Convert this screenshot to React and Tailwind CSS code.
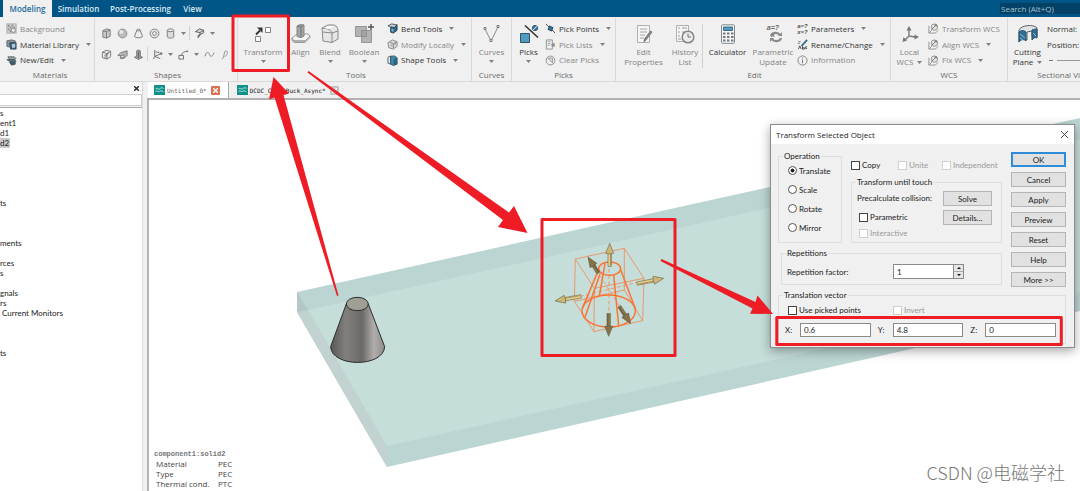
import React from "react";

const G = "#777777";

/* ---------- small ribbon icons ---------- */

function Icon({ size = 11, box = 12, children }) {
  return (
    <svg width={size} height={size} viewBox={`0 0 ${box} ${box}`} className="shrink-0" fill="none" stroke={G} strokeWidth="1" aria-hidden="true">
      {children}
    </svg>
  );
}

const Checker = () => (
  <Icon>
    <rect x="1" y="1" width="10" height="10" fill="#d5d5d5" stroke="#a5a5a5" />
    <path d="M2 2h2v2H2zM6 2h2v2H6zM4 4h2v2H4zM8 4h2v2H8zM2 6h2v2H2zM6 6h2v2H6zM4 8h2v2H4z" fill="#8c8c8c" stroke="none" />
    <circle cx="8" cy="8" r="2.3" fill="#e8e8e8" stroke="#8c8c8c" />
  </Icon>
);
const Library = () => (
  <Icon>
    <path d="M1 2l5-1 4 1v6l-5 1-4-1z" fill="#8d979c" stroke="#5c666b" />
    <path d="M4 4h7v7H5z" fill="#2e6686" stroke="#39464d" />
    <path d="M6 6l4-1v4l-3 1z" fill="#b9cbd4" stroke="none" />
  </Icon>
);
const Stack = () => (
  <Icon>
    <path d="M2 2h7l2 2-2 1H4z" fill="#9aa4a9" stroke="#5c666b" />
    <path d="M1 5h8l2 2H4z" fill="#5d7a8a" stroke="#4a5559" />
    <path d="M4 8h6v2l-4 1z" fill="#2e6686" stroke="#39464d" />
  </Icon>
);
const Box = () => (
  <Icon>
    <path d="M2 3l4-2 4 1v7l-4 2-4-1z" fill="#c9c9c9" />
    <path d="M2 3l4 1v7M6 4l4-2" />
  </Icon>
);
const Sphere = () => (
  <Icon>
    <circle cx="6" cy="6" r="4.8" fill="#bdbdbd" stroke="#8c8c8c" />
    <circle cx="4.6" cy="4.4" r="2" fill="#ededed" stroke="none" />
  </Icon>
);
const ConeIcon = () => (
  <Icon>
    <path d="M4.3 2.2L1.6 9.2c1 2 7.800 2 8.800 0L7.700 2.200z" fill="#ececec" />
    <ellipse cx="6" cy="2.300" rx="1.800" ry="1" fill="#fff" />
  </Icon>
);
const Torus = () => (
  <Icon>
    <circle cx="6" cy="6" r="4.800" fill="#e6e6e6" />
    <circle cx="6" cy="6" r="2" fill="#fafafa" />
  </Icon>
);
const Cylinder = () => (
  <Icon>
    <path d="M2.500 2.500v7c0 2 7 2 7 0v-7" fill="#dcdcdc" />
    <ellipse cx="6" cy="2.500" rx="3.500" ry="1.500" fill="#f4f4f4" />
  </Icon>
);
const Bent = () => (
  <Icon>
    <path d="M1.500 4L6 1l4.500 1.500L6.500 5zM6.500 5v2.500L10.500 5V2.500M6.500 7.500L4.500 10.500V8z" fill="#dadada" stroke="#555" />
  </Icon>
);
const BoxMesh = () => (
  <Icon>
    <path d="M1.500 3.500l4-2 5 1v6l-4 2.500-5-1.500z" fill="#ececec" />
    <path d="M1.500 3.500l5 1.500v6M6.500 5l4-2.500M3.500 7.500l5-3M4 10l3-4" />
  </Icon>
);
const Extrude = () => (
  <Icon>
    <path d="M1 7l3-3 7-2v5l-3 3-4 .500v-3z" fill="#b5b5b5" />
    <path d="M4 7.500l3.500-1V9l-3 1z" fill="#f2f2f2" />
  </Icon>
);
const Column = () => (
  <Icon>
    <path d="M4 2l2-1 2 1v6l2.500 1L6 11.500 1.500 9 4 8z" fill="#999" />
    <path d="M6 3v7" stroke="#666" />
  </Icon>
);
const Axes = () => (
  <Icon>
    <path d="M3 1v7l7-3M3 8l6 2.500M3 8l-1.500 3M4 3l4 1" stroke="#6a6a6a" />
    <circle cx="10" cy="5" r="1" fill="#777" />
  </Icon>
);
const Wire = () => (
  <Icon>
    <path d="M1 7h5v4H1zM3.500 7C4 4 7 2.500 11 2.500" stroke="#6a6a6a" />
    <path d="M10 1.500v2" stroke="#6a6a6a" />
  </Icon>
);
const Wave = () => (
  <Icon>
    <path d="M1 8c2-6 4-5 5-2s3 3 5-2" stroke="#7a7a7a" />
  </Icon>
);
const Curl = () => (
  <Icon>
    <path d="M2 11C5 10 4 2 6.500 2S8 8 5 8" stroke="#8a8a8a" />
  </Icon>
);
const BlueCube = () => (
  <Icon>
    <path d="M1 3l4-2 6 1-3 3-4-.500z" fill="#c2ccd0" stroke="#4b5a62" />
    <path d="M4 4.500l4 .500 3-3v6l-4 3-3-1z" fill="#2c6a8b" stroke="#37434a" />
    <path d="M5 6l2 .500v3L5 9z" fill="#7fb2cb" stroke="none" />
  </Icon>
);
const GrayCube = () => (
  <Icon>
    <path d="M1 4l5-3 5 2v5l-4 3-5-1.500z" fill="#dadada" stroke="#888" />
    <path d="M3 4l4 1v5M7 5l4-2M4 7l2 .500M8 6l2-1" stroke="#888" />
  </Icon>
);
const ShapeCube = () => (
  <Icon>
    <path d="M1 2.500L4 1v9l-3-1z" fill="#dfe6e9" stroke="#53656f" />
    <path d="M4 1.500l4-.500 3 2v7l-4 1.500-3-1.500z" fill="#3e8db3" stroke="#37505c" />
    <path d="M7 4.500v6.500l4-1.500V3z" fill="#2b6483" stroke="none" />
  </Icon>
);
const PickPoint = () => (
  <Icon>
    <path d="M1 1l10 10" stroke="#444" />
    <rect x="4" y="4" width="4" height="4" fill="#3178a0" stroke="#26455a" transform="rotate(20 6 6)" />
  </Icon>
);
const PickList = () => (
  <Icon>
    <path d="M1.500 1h6.500v10H1.500z" fill="#f2f2f2" stroke="#8d8d8d" />
    <path d="M3 3h3M3 5h3M3 7h2" stroke="#a0a0a0" />
    <path d="M10.500 4L6 6.500l4.500 2.500z" fill="#8a8a8a" stroke="none" />
  </Icon>
);
const ClearPick = () => (
  <Icon>
    <circle cx="6" cy="6" r="4.800" stroke="#8a8a8a" />
    <path d="M2.500 3l7 6.500M4 3.500h4v4" stroke="#8a8a8a" />
  </Icon>
);
const Rename = () => (
  <Icon>
    <path d="M1 3h3M1 5h2" stroke="#777" />
    <path d="M11 1L6 6.500 5 8" stroke="#2f6c90" strokeWidth="2" />
    <path d="M1.500 11L3 7.500 4.500 11M6 8v3h2V9.500H6M11 8.500H9.500v2H11" stroke="#444" />
  </Icon>
);
const Info = () => (
  <Icon>
    <circle cx="6" cy="6" r="5" stroke="#808080" />
    <path d="M6 5v4M6 2.800v1.200" stroke="#707070" />
  </Icon>
);
const WcsIcon = () => (
  <Icon>
    <path d="M1 3v8h7l3-3M1 11l3-3" stroke="#8f8f8f" />
    <circle cx="7" cy="4.500" r="3.500" fill="#e5e5e5" stroke="#8f8f8f" />
    <path d="M4 7l5-5M7 2h2v2" stroke="#707070" />
  </Icon>
);

/* ---------- large ribbon icons ---------- */

const Big = ({ children }) => (
  <Icon size={20} box={20}>
    {children}
  </Icon>
);
const TransformIcon = () => (
  <Big>
    <path d="M2.500 12.500h5v5h-5zM12.500 3.500h5v5h-5z" stroke="#858585" fill="#fff" />
    <path d="M3 10.500L7 6.500" stroke="#333" strokeWidth="1.800" />
    <path d="M4 3.500H9.500V9z" fill="#333" stroke="none" />
  </Big>
);
const AlignIcon = () => (
  <Big>
    <path d="M1 14l5-4h11l2 2-5 5H3z" fill="#f4f4f4" stroke="#999" />
    <path d="M1 14v2l2 2.500h11l5-5V12M3 17h11" stroke="#999" />
    <path d="M6 2l3-1.500 4 .500v11l-3 1.500-4-1z" fill="#a2a2a2" stroke="#888" />
    <path d="M6 2l4 1v10.500M10 3l3-2" stroke="#777" />
  </Big>
);
const BlendIcon = () => (
  <Big>
    <path d="M2 4l6-3h6c3 1 4 3 4 6v8l-6 3.500L3 17z" fill="#e6e6e6" stroke="#8a8a8a" />
    <path d="M2 4c4 1 8 0 10 5v9.500M12 9l6-2M3 8l9 1" stroke="#8a8a8a" />
    <path d="M4 4l5-2h5l-5 3z" fill="#fff" stroke="none" />
  </Big>
);
const BooleanIcon = () => (
  <Big>
    <path d="M1.500 2.500h11v4h5v12H7.500v-6h-6z" fill="#b3b3b3" stroke="#969696" />
    <path d="M7.500 6.500h5v6h-5z" fill="#a4a4a4" stroke="#8e8e8e" />
    <path d="M17 0v6M14 3h6" stroke="#555" strokeWidth="1.400" />
  </Big>
);
const CurvesIcon = () => (
  <Big>
    <path d="M3 5l6 12 7-14" stroke="#8a8a8a" />
    <path d="M2 3.500h2v2H2zM8 15.500h2v2H8zM15 1.500h2v2h-2z" fill="#fff" stroke="#777" />
  </Big>
);
const PicksIcon = () => (
  <Big>
    <path d="M1.500 9.500h9v9h-9z" fill="#4f9cc0" stroke="#2d5568" />
    <path d="M6 1.500l13 12" stroke="#333" strokeWidth="1.600" />
    <circle cx="16" cy="4" r="2.600" fill="#3f7fa3" stroke="#31556a" />
    <path d="M14 6l4-4" stroke="#c6dbe6" />
  </Big>
);
const EditPropsIcon = () => (
  <Big>
    <path d="M3.500 1.500h12v17h-12z" fill="#f5f5f5" stroke="#b0b0b0" />
    <path d="M6 5h7M6 8h7M6 11h5M6 14h4" stroke="#a5a5a5" />
    <path d="M18 8l-6 8-2 2 .500-3 6-8z" fill="#8b8b8b" stroke="#777" />
  </Big>
);
const HistoryIcon = () => (
  <Big>
    <path d="M1.500 1.500h12v16h-12z" fill="#f5f5f5" stroke="#b0b0b0" />
    <path d="M3 4h2M7 4h5M3 8h2M7 8h4M3 12h2M3 15h3" stroke="#999" />
    <circle cx="13" cy="13" r="5.800" fill="#ececec" stroke="#858585" strokeWidth="1.500" />
    <path d="M13 9.500V13h3" stroke="#707070" />
  </Big>
);
const CalculatorIcon = () => (
  <Big>
    <rect x="3.500" y=".800" width="13" height="18.500" rx="1" fill="#f4f7f8" stroke="#7b8990" />
    <path d="M5.500 3h9v3.500h-9z" fill="#4f9cc0" stroke="#416c80" />
    <path d="M5 8.500h2.500v2H5zM9 8.500h2.500v2H9zM13 8.500h2.500v2H13zM5 12h2.500v2H5zM9 12h2.500v2H9zM13 12h2.500v2H13zM5 15.500h2.500v2H5zM9 15.500h2.500v2H9zM13 15.500h2.500v2H13z" fill="#777" stroke="none" />
  </Big>
);
const UpdateIcon = () => (
  <span className="relative block size-5 font-['Liberation_Sans',sans-serif] text-[7px] leading-[7px] font-bold text-[#666] italic">
    <span className="block">a=?</span>
    <span className="block">x</span>
    <svg width="14" height="14" viewBox="0 0 14 14" className="absolute right-0 bottom-0" fill="none" stroke="#8a8a8a" strokeWidth="2.200" aria-hidden="true">
      <path d="M2 6c1-4 7-4 9-1M12 8c-1 4-7 4-9 1" />
      <path d="M9 6h4V2zM5 8H1v4z" fill="#8a8a8a" stroke="none" />
    </svg>
  </span>
);
const ParamsIcon = () => (
  <span className="block w-[11px] shrink-0 font-['Liberation_Sans',sans-serif] text-[6px] leading-[6px] font-bold whitespace-nowrap text-[#555] italic">
    <span className="block">a=?</span>
    <span className="block">x=?</span>
  </span>
);
const LocalWcsIcon = () => (
  <Big>
    <path d="M9 5v7l6 1M9 12l-4 4" stroke="#777" strokeWidth="1.400" />
    <path d="M9 2L6.500 6.500h5zM19 13l-4.500-2.500v5zM2.500 18l1-5 3.500 3.500z" fill="#777" stroke="none" />
  </Big>
);
const CuttingIcon = () => (
  <Big>
    <path d="M1 6C3 1 16 0 19 4v9c-2-2-4-1-5 0V7l-5 1v8c-3-2-6-1-8 2z" fill="#e2e5e7" stroke="#5b6468" />
    <path d="M1 8c2-2 5-2 7 0v9c-2-2-5-2-7 1zM14 6c2-1 4-1 5-1v9c-2-1-4 0-5 2z" fill="#2d7196" stroke="#2b5166" />
    <path d="M2 10l5 4M2 14l3 2M15 9l3 3" stroke="#8dbdd3" />
  </Big>
);

/* ---------- ribbon parts ---------- */

function Caret() {
  return (
    <svg width="5" height="3" viewBox="0 0 5 3" className="shrink-0" aria-hidden="true">
      <path d="M0 0h5L2.500 3z" fill="#808080" />
    </svg>
  );
}

function Group({ title, width, children }) {
  return (
    <section className={`flex shrink-0 flex-col border-r border-[#d9d9d9] ${width}`}>
      <div className="flex h-[50px] pt-[3px]">{children}</div>
      <h2 className="text-center leading-[13px] whitespace-nowrap text-[#6a6a6a]">{title}</h2>
    </section>
  );
}

function Large({ icon, lines, caret, width, muted }) {
  return (
    <button type="button" className={`flex shrink-0 flex-col items-center pt-[3px] ${width} ${muted ? "text-[#828282]" : "text-[#333]"}`}>
      {icon}
      <span className="mt-[3px] flex flex-col items-center leading-[10px] whitespace-nowrap">
        {lines.map((l, i) => (
          <span key={l} className="flex items-center gap-1">
            {l}
            {caret === "inline" && i === lines.length - 1 && <Caret />}
          </span>
        ))}
      </span>
      {caret === "below" && (
        <span className="mt-[3px]">
          <Caret />
        </span>
      )}
    </button>
  );
}

function Small({ icon, label, caret, muted }) {
  return (
    <button type="button" className={`flex h-4 items-center gap-[3px] whitespace-nowrap ${muted ? "text-[#868686]" : "text-[#333]"}`}>
      {icon}
      <span>{label}</span>
      {caret && (
        <span className="ml-[4px]">
          <Caret />
        </span>
      )}
    </button>
  );
}

const List = ({ className = "", children }) => <div className={`flex flex-col items-start ${className}`}>{children}</div>;

function Slot({ label, children }) {
  return (
    <button type="button" aria-label={label} className="flex w-4 justify-center">
      {children}
    </button>
  );
}
const CaretSlot = () => (
  <span className="flex w-[10px] justify-center">
    <Caret />
  </span>
);
const Rule = () => <span className="mx-[1px] h-[14px] w-px bg-[#d2d2d2]" />;

function Ribbon() {
  return (
    <div className="flex h-[65px] overflow-hidden border-b border-[#dadada] bg-[#f0f0f0] pt-px text-[8px]">
      <Group title="Materials" width="w-[95px] pl-[6px]">
        <List>
          <Small icon={<Checker />} label="Background" muted />
          <Small icon={<Library />} label="Material Library" caret />
          <Small icon={<Stack />} label="New/Edit" caret />
        </List>
      </Group>
      <Group title="Shapes" width="w-[143px] pl-[3px]">
        <div className="flex flex-col gap-[5px] pt-[4px]">
          <div className="flex h-4 items-center">
            <Slot label="Brick"><Box /></Slot>
            <Slot label="Sphere"><Sphere /></Slot>
            <Slot label="Cone"><ConeIcon /></Slot>
            <Slot label="Torus"><Torus /></Slot>
            <Slot label="Cylinder"><Cylinder /></Slot>
            <CaretSlot />
            <Rule />
            <Slot label="Bend"><Bent /></Slot>
            <CaretSlot />
          </div>
          <div className="flex h-4 items-center">
            <Slot label="Faces"><BoxMesh /></Slot>
            <Slot label="Extrude"><Extrude /></Slot>
            <Slot label="Loft"><Column /></Slot>
            <Rule />
            <Slot label="Axes"><Axes /></Slot>
            <CaretSlot />
            <Slot label="Wire"><Wire /></Slot>
            <CaretSlot />
            <Slot label="Curve"><Wave /></Slot>
            <Slot label="Trace"><Curl /></Slot>
          </div>
        </div>
      </Group>
      <Group title="Tools" width="w-[234px] pl-[3px]">
        <Large icon={<TransformIcon />} lines={["Transform"]} caret="below" width="w-[44px]" muted />
        <Large icon={<AlignIcon />} lines={["Align"]} width="w-[31px]" muted />
        <Large icon={<BlendIcon />} lines={["Blend"]} caret="below" width="w-[28px]" muted />
        <Large icon={<BooleanIcon />} lines={["Boolean"]} caret="below" width="w-[40px]" muted />
        <List className="pl-[3px]">
          <Small icon={<BlueCube />} label="Bend Tools" caret />
          <Small icon={<GrayCube />} label="Modify Locally" caret muted />
          <Small icon={<ShapeCube />} label="Shape Tools" caret />
        </List>
      </Group>
      <Group title="Curves" width="w-[40px]">
        <Large icon={<CurvesIcon />} lines={["Curves"]} caret="below" width="w-full" muted />
      </Group>
      <Group title="Picks" width="w-[104px]">
        <Large icon={<PicksIcon />} lines={["Picks"]} caret="below" width="w-[33px]" />
        <List>
          <Small icon={<PickPoint />} label="Pick Points" caret />
          <Small icon={<PickList />} label="Pick Lists" caret muted />
          <Small icon={<ClearPick />} label="Clear Picks" muted />
        </List>
      </Group>
      <Group title="Edit" width="w-[275px] pl-[3px]">
        <Large icon={<EditPropsIcon />} lines={["Edit", "Properties"]} width="w-[49px]" muted />
        <Large icon={<HistoryIcon />} lines={["History", "List"]} width="w-[34px]" muted />
        <span className="mt-[3px] h-[44px] w-px bg-[#d2d2d2]" />
        <Large icon={<CalculatorIcon />} lines={["Calculator"]} width="w-[49px]" />
        <Large icon={<UpdateIcon />} lines={["Parametric", "Update"]} width="w-[42px]" muted />
        <List className="pl-[3px]">
          <Small icon={<ParamsIcon />} label="Parameters" caret />
          <Small icon={<Rename />} label="Rename/Change" caret />
          <Small icon={<Info />} label="Information" muted />
        </List>
      </Group>
      <Group title="WCS" width="w-[117px]">
        <Large icon={<LocalWcsIcon />} lines={["Local", "WCS"]} caret="inline" width="w-[37px]" muted />
        <List>
          <Small icon={<WcsIcon />} label="Transform WCS" muted />
          <Small icon={<WcsIcon />} label="Align WCS" caret muted />
          <Small icon={<WcsIcon />} label="Fix WCS" caret muted />
        </List>
      </Group>
      <Group title="Sectional View" width="w-[113px]">
        <Large icon={<CuttingIcon />} lines={["Cutting", "Plane"]} caret="inline" width="w-[39px]" />
        <div className="flex grow flex-col text-[#333]">
          <label className="flex h-4 items-center gap-1">
            Normal: <input className="h-[14px] w-0 grow border border-[#c8c8c8] bg-white" />
          </label>
          <label className="flex h-4 items-center gap-1">
            Position: <input className="h-[14px] w-0 grow border border-[#c8c8c8] bg-white" />
          </label>
          <div className="flex h-4 items-center gap-1 pl-[2px]">
            <span className="h-px w-1 bg-[#777]" />
            <span className="h-px grow bg-[#999]" />
          </div>
        </div>
      </Group>
    </div>
  );
}

/* ---------- navigation tree ---------- */

const TREE = ["s", "ent1", "d1", "d2", "", "", "", "", "", "ts", "", "", "", "ments", "", "rces", "s", "", "gnals", "rs", " Current Monitors", "", "", "", "ts"];

function Tree() {
  return (
    <aside className="flex w-[143px] shrink-0 flex-col border-r border-[#dcdcdc] bg-[#f0f0f0] font-['Lato',sans-serif] text-[8px] text-[#222]">
      <div className="flex h-3 items-center justify-end bg-[#f7f7f7] pr-[2px]">
        <button type="button" aria-label="Close panel" className="p-px">
          <svg width="5" height="5" viewBox="0 0 5 5" stroke="#222" strokeWidth="1.300" aria-hidden="true">
            <path d="M0 0l5 5M5 0L0 5" />
          </svg>
        </button>
      </div>
      <input aria-label="Filter tree" className="h-3 w-full border border-l-0 border-[#d0d0d0] bg-white outline-none" />
      <ul className="mt-px grow border-t border-[#a8a8a8] bg-white">
        {TREE.map((t, i) => (
          <li key={i} className="h-[10px] leading-[10px] whitespace-pre">
            <span className={t === "d2" ? "inline-block h-[10px] bg-[#c8c8c8] pr-px" : ""}>{t}</span>
          </li>
        ))}
      </ul>
    </aside>
  );
}

/* ---------- document tabs ---------- */

const AppGlyph = () => (
  <svg width="11" height="10" viewBox="0 0 11 10" className="shrink-0" aria-hidden="true">
    <path d="M0 0h11v10H0z" fill="#0f9088" />
    <path d="M1.500 4c1.500-2 2.500 1 4 0s2-2 4-.500M1.500 6.500c1.500-2 2.500 1 4 0s2-1 4 .500" stroke="#c9efeb" strokeWidth=".900" fill="none" />
  </svg>
);

function DocTab({ name, active }) {
  return (
    <div className={`flex h-4 items-center gap-[2px] pr-2 pl-[6px] font-['DejaVu_Sans_Mono',monospace] text-[6px] whitespace-nowrap ${active ? "border-r border-[#aaa] bg-white text-[#666]" : "text-[#111]"}`}>
      <AppGlyph />
      <button type="button">{name}</button>
      <button type="button" aria-label={`Close ${name}`} className={`ml-[2px] flex size-[9px] items-center justify-center rounded-[1px] ${active ? "bg-[#dc7152]" : "bg-[#c4c4c4]"}`}>
        <svg width="5" height="5" viewBox="0 0 5 5" stroke="#fff" strokeWidth="1.400" aria-hidden="true">
          <path d="M0 0l5 5M5 0L0 5" />
        </svg>
      </button>
    </div>
  );
}

/* ---------- 3D scene ---------- */

function Handle({ x1, y1, x2, y2, light }) {
  const a = (Math.atan2(y2 - y1, x2 - x1) * 180) / Math.PI;
  const len = Math.hypot(x2 - x1, y2 - y1);
  const main = light ? "#e6cf8c" : "#8d7a50";
  return (
    <g transform={`translate(${x1} ${y1}) rotate(${a})`} stroke="#5d5030" strokeWidth="1.500">
      <rect x="0" y="-5" width={len - 26} height="10" fill={main} />
      <path d={`M2 2.500H${len - 28}`} stroke={light ? "#a8925a" : "#6b5b38"} strokeWidth="3" />
      <path d={`M${len} 0L${len - 30} -12Q${len - 34} 0 ${len - 30} 12z`} fill={light ? "#cdb679" : "#84724a"} />
    </g>
  );
}

function Scene() {
  return (
    <svg width="931" height="390" viewBox="149 101 931 390" className="absolute top-0 left-0" role="img" aria-label="Substrate with two cones">
      <defs>
        <linearGradient id="metal" x1="0" x2="1" y1="0" y2="0">
          <stop offset="0" stopColor="#5a5956" />
          <stop offset=".28" stopColor="#807f7b" />
          <stop offset=".42" stopColor="#797674" />
          <stop offset=".58" stopColor="#6d6868" />
          <stop offset=".8" stopColor="#b0adab" />
          <stop offset="1" stopColor="#8f8c8a" />
        </linearGradient>
      </defs>
      <path d="M297 293L1080 119V312L387 468L297 313z" fill="#bbd5d3" />
      <path d="M297 293L387 447V468L297 313z" fill="#c1d2d0" />
      <path d="M308 311L1080 140V293L387 447z" fill="#c5deda" />
      <path d="M297 293V313L308 311z" fill="#b3c6c8" />
      <g transform="translate(145 280) scale(.3333)">
        <path d="M604 75L557 203C560 266 716 266 719 203L670 75z" fill="url(#metal)" stroke="#2b2b2b" strokeWidth="3" />
        <ellipse cx="637" cy="75" rx="33" ry="20" fill="#a09f93" stroke="#2b2b2b" strokeWidth="3" />
      </g>
      <g transform="translate(530 210) scale(.3333)" fill="none" stroke="#ef8a55">
        <path d="M136 150L283 118L342 208L193 238zM133 277L283 243L338 335L192 368zM136 150L133 277M283 118V243M342 208L338 335M193 238L192 368" strokeWidth="2.500" />
        <path d="M237 180V330M150 262L330 218" strokeWidth="2.500" strokeDasharray="11 8" />
        <path d="M190 168L290 325" strokeWidth="2" strokeDasharray="11 8" />
        <g stroke="#fb7434" strokeWidth="4.500">
          <ellipse cx="239" cy="179" rx="33" ry="20" />
          <ellipse cx="236" cy="306" rx="80" ry="48" />
          <path d="M206 182L158 296M272 182L315 296M225 163L208 262M210 195L165 325M251 198L266 350" />
        </g>
        <Handle x1={239} y1={172} x2={239} y2={103} light />
        <Handle x1={236} y1={314} x2={236} y2={382} />
        <Handle x1={153} y1={262} x2={75} y2={276} light />
        <Handle x1={321} y1={224} x2={401} y2={208} light />
        <Handle x1={205} y1={192} x2={174} y2={144} />
        <Handle x1={268} y1={292} x2={302} y2={344} />
      </g>
    </svg>
  );
}

/* ---------- transform dialog ---------- */

function Check({ label, disabled, className = "" }) {
  return (
    <label className={`flex h-[10px] items-center gap-[2px] whitespace-nowrap ${disabled ? "text-[#9a9a9a]" : ""} ${className}`}>
      <input type="checkbox" disabled={disabled} className="size-[9px] shrink-0 appearance-none border border-[#444] bg-white disabled:border-[#cfcfcf]" />
      {label}
    </label>
  );
}

function Panel({ title, className, children }) {
  return (
    <fieldset className={`min-w-0 border border-[#dedede] ${className}`}>
      <legend className="ml-[4px] h-[10px] px-px leading-[10px] whitespace-nowrap">{title}</legend>
      {children}
    </fieldset>
  );
}

const Push = ({ children, className = "border border-[#b5b5b5]" }) => (
  <button type="button" className={`flex h-[15px] w-full items-center justify-center bg-[#e1e1e1] ${className}`}>
    {children}
  </button>
);

const field = "border border-[#8a8a8a] bg-white px-[3px] outline-none";

function Coordinate({ axis, value }) {
  return (
    <label className="flex flex-1 items-center">
      <span className="w-[15px] shrink-0">{axis}:</span>
      <input defaultValue={value} className={`h-[14px] w-0 grow ${field}`} />
    </label>
  );
}

function TransformDialog() {
  return (
    <div role="dialog" aria-label="Transform Selected Object" className="absolute top-[124px] left-[770px] w-[305px] border border-[#8c8c8c] bg-[#f0f0f0] font-['Lato',sans-serif] text-[8px] text-[#222] shadow-[0_3px_10px_rgba(0,0,0,0.35)]">
      <header className="flex h-[19px] items-center justify-between bg-white pr-[6px] pl-[5px]">
        <h2 className="font-['Open_Sans',sans-serif]">Transform Selected Object</h2>
        <button type="button" aria-label="Close">
          <svg width="7" height="7" viewBox="0 0 7 7" stroke="#333" strokeWidth=".900" aria-hidden="true">
            <path d="M0 0l7 7M7 0L0 7" />
          </svg>
        </button>
      </header>
      <form className="flex flex-col pt-[7px] pr-[8px] pb-[3px] pl-[7px]" onSubmit={(e) => e.preventDefault()}>
        <div className="flex gap-[9px]">
          <div className="flex grow flex-col">
            <div className="flex gap-[9px]">
              <Panel title="Operation" className="h-[92px] w-[64px] shrink-0">
                {["Translate", "Scale", "Rotate", "Mirror"].map((name, i) => (
                  <label key={name} className="flex h-[19px] items-center gap-[2px] pl-[9px]">
                    <input type="radio" name="operation" defaultChecked={i === 0} className="size-[9px] shrink-0 appearance-none rounded-full border border-[#555] bg-white checked:bg-[radial-gradient(#222_35%,#fff_45%)]" />
                    {name}
                  </label>
                ))}
              </Panel>
              <div className="flex grow flex-col">
                <div className="flex pt-[9px]">
                  <Check label="Copy" className="w-[47px]" />
                  <Check label="Unite" disabled className="w-[44px]" />
                  <Check label="Independent" disabled />
                </div>
                <Panel title="Transform until touch" className="mt-[7px] h-[66px]">
                  <div className="flex justify-between pt-[4px] pr-[9px] pl-[5px]">
                    <div className="flex flex-col">
                      <span className="h-[15px] leading-[15px] whitespace-nowrap">Precalculate collision:</span>
                      <Check label="Parametric" className="mt-[6px] ml-[2px]" />
                      <Check label="Interactive" disabled className="mt-[6px] ml-[2px]" />
                    </div>
                    <div className="flex w-[49px] flex-col gap-[4px]">
                      <Push>Solve</Push>
                      <Push>Details...</Push>
                    </div>
                  </div>
                </Panel>
              </div>
            </div>
            <Panel title="Repetitions" className="mt-[5px] ml-[3px] h-[37px]">
              <div className="flex items-center pt-[6px] pl-[5px]">
                <label htmlFor="factor" className="w-[106px]">Repetition factor:</label>
                <input id="factor" defaultValue="1" className={`h-[15px] w-[60px] border-r-0 ${field}`} />
                <div className="flex h-[15px] w-[11px] flex-col border border-[#8a8a8a] bg-[#e6e6e6]">
                  <button type="button" aria-label="Increase" className="flex flex-1 items-center justify-center border-b border-[#aaa]">
                    <svg width="4" height="2" viewBox="0 0 4 2" aria-hidden="true"><path d="M0 2h4L2 0z" fill="#111" /></svg>
                  </button>
                  <button type="button" aria-label="Decrease" className="flex flex-1 items-center justify-center">
                    <svg width="4" height="2" viewBox="0 0 4 2" aria-hidden="true"><path d="M0 0h4L2 2z" fill="#111" /></svg>
                  </button>
                </div>
              </div>
            </Panel>
          </div>
          <div className="flex w-[55px] shrink-0 flex-col gap-[5px] pt-px">
            <Push className="border-2 border-[#2f8ad8]">OK</Push>
            <Push>Cancel</Push>
            <Push>Apply</Push>
            <Push>Preview</Push>
            <Push>Reset</Push>
            <Push>Help</Push>
            <Push>More &gt;&gt;</Push>
          </div>
        </div>
        <Panel title="Translation vector" className="mt-[3px] h-[54px]">
          <div className="flex pt-[5px] pl-[9px]">
            <Check label="Use picked points" className="w-[105px]" />
            <Check label="Invert" disabled />
          </div>
          <div className="mt-[8px] flex gap-[7px] pr-[9px] pl-[6px]">
            <Coordinate axis="X" value="0.6" />
            <Coordinate axis="Y" value="4.8" />
            <Coordinate axis="Z" value="0" />
          </div>
        </Panel>
      </form>
    </div>
  );
}

/* ---------- red call-outs ---------- */

function Callouts() {
  return (
    <svg width="1080" height="491" viewBox="0 0 1080 491" className="pointer-events-none absolute top-0 left-0" aria-hidden="true">
      <g fill="none" stroke="#ee1c25" strokeWidth="3" strokeLinejoin="round">
        <rect x="233" y="16" width="55.500" height="54.500" />
        <rect x="542" y="219.500" width="133" height="136" />
        <rect x="776.800" y="317.500" width="284.500" height="27" />
      </g>
      <g fill="#ee1c25">
        <path d="M273.500 77L289 93.500L283.500 95L338.500 295.500L337 296L274.500 97.500L269 99.500z" />
        <path d="M527.500 233L514 206L509 212.500L308.500 71L307.500 72.500L503 220L498 227z" />
        <path d="M773 314L757.500 295.500L755.500 302L661.500 259L660.500 261L752.500 308.500L750 313.700z" />
      </g>
    </svg>
  );
}

/* ---------- page ---------- */

export default function App() {
  return (
    <div className="relative flex min-h-screen w-full flex-col overflow-hidden bg-[#f0f0f0] font-['Open_Sans','Noto_Sans',sans-serif] text-[8px]">
      <header className="flex h-[17px] items-center justify-between bg-[#005587] text-[8px] font-semibold text-[#dce9f1]">
        <nav className="flex h-full pl-[3px] leading-[18px]">
          <a href="#modeling" className="w-[49px] bg-[#f0f0f0] text-center text-[#1a6a98]">Modeling</a>
          <a href="#simulation" className="w-[53px] text-center">Simulation</a>
          <a href="#post" className="w-[71px] text-center">Post-Processing</a>
          <a href="#view" className="w-[33px] text-center">View</a>
        </nav>
        <input aria-label="Search" placeholder="Search (Alt+Q)" className="h-[11px] w-20 bg-[#034166] px-px font-normal outline-none placeholder:text-[#a9c1d0]" />
      </header>
      <Ribbon />
      <div className="flex grow">
        <Tree />
        <main className="ml-[4px] flex min-w-0 grow flex-col">
          <div className="flex items-start gap-[2px] pl-px">
            <DocTab name="Untitled_0*" active />
            <DocTab name="DCDC_Conv_Buck_Async*" />
          </div>
          <div className="relative grow overflow-hidden border-t-2 border-l-2 border-[#b2b2b2] bg-white">
            <Scene />
            <div className="absolute bottom-[2px] left-[5px] text-[8px] leading-[10px] text-[#444]">
              <p className="font-['Liberation_Mono',monospace] text-[7px] font-bold text-[#777]">component1:solid2</p>
              <dl className="grid grid-cols-[62px_auto] pl-[2px]">
                <dt>Material</dt><dd>PEC</dd>
                <dt>Type</dt><dd>PEC</dd>
                <dt>Thermal cond.</dt><dd>PTC</dd>
              </dl>
            </div>
          </div>
        </main>
      </div>
      <TransformDialog />
      <Callouts />
      <p className="absolute right-[15px] bottom-[7px] font-['Noto_Sans_CJK_SC',sans-serif] text-[18px] leading-6 font-light text-[#777]">CSDN @电磁学社</p>
    </div>
  );
}
